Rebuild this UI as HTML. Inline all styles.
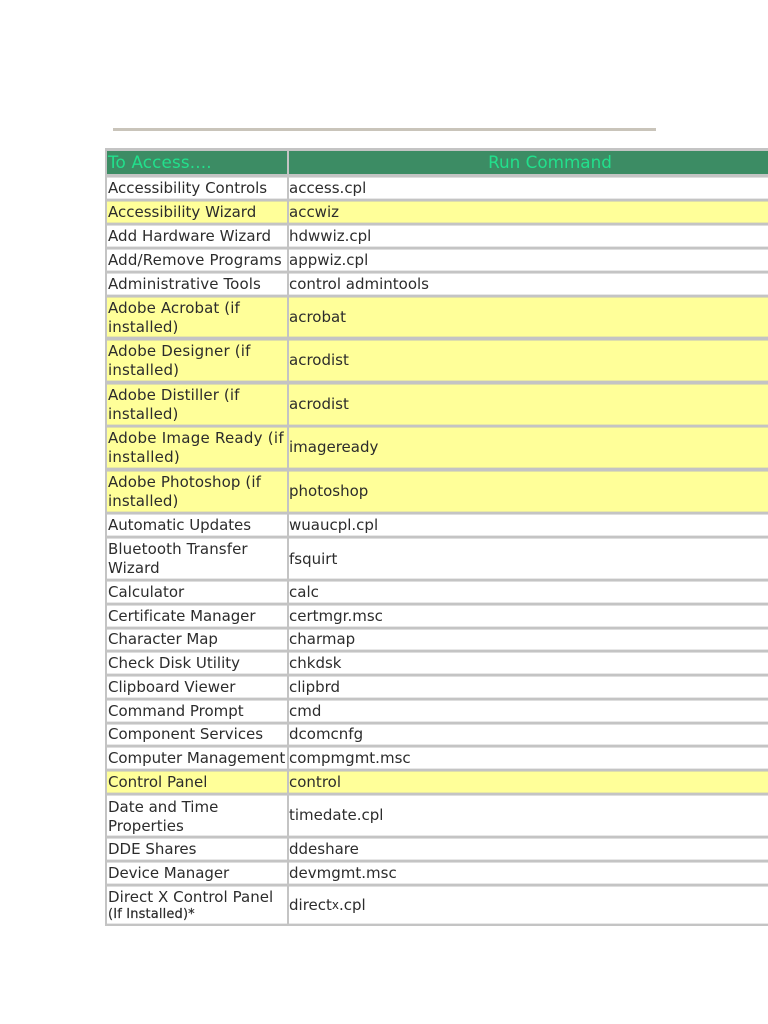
<!DOCTYPE html>
<html><head><meta charset="utf-8">
<style>
html,body{margin:0;padding:0;background:#fff;width:768px;height:1024px;overflow:hidden}
body{position:relative;font-family:"DejaVu Sans",sans-serif;font-size:15px;color:#2c2c2c}
#w{position:absolute;left:0;top:0;width:768px;height:1024px;overflow:hidden;filter:blur(.35px)}
.hr{position:absolute;left:113px;top:128px;width:543px;height:3px;background:#c9c4ba}
.t{position:absolute;left:105px;top:148px;width:663px;height:778px;background:#c4c4c4}
.c{position:absolute;display:flex;align-items:center;line-height:19px;background:#fff;white-space:nowrap;box-sizing:border-box;box-shadow:inset 0 1px rgba(190,190,190,.5),inset 0 -1px rgba(190,190,190,.35)}
.a{left:107px;width:180px;padding-left:1px}
.b{left:289px;width:479px}
.y{background:#ffff99}
.g{background:#3c8c64;color:#22e08c;font-size:16.8px;box-shadow:none}
.d{padding-top:2px}
small{font-size:13px;line-height:15px}
</style></head><body><div id="w">
<div class="hr"></div>
<div class="t"></div>
<div class="c a g" style="top:151px;height:23px;letter-spacing:.15px">To Access....</div>
<div class="c b g" style="top:151px;height:23px;justify-content:center;width:522px">Run Command</div>

<div class="c a" style="top:177px;height:22px">Accessibility Controls</div><div class="c b" style="top:177px;height:22px">access.cpl</div>
<div class="c a y" style="top:201px;height:22px">Accessibility Wizard</div><div class="c b y" style="top:201px;height:22px">accwiz</div>
<div class="c a" style="top:225px;height:22px;letter-spacing:.05px">Add Hardware Wizard</div><div class="c b" style="top:225px;height:22px">hdwwiz.cpl</div>
<div class="c a" style="top:249px;height:22px;letter-spacing:.16px">Add/Remove Programs</div><div class="c b" style="top:249px;height:22px">appwiz.cpl</div>
<div class="c a" style="top:273px;height:22px;letter-spacing:.1px">Administrative Tools</div><div class="c b" style="top:273px;height:22px">control admintools</div>
<div class="c a y d" style="top:297px;height:40px;letter-spacing:.1px">Adobe Acrobat (if<br>installed)</div><div class="c b y" style="top:297px;height:40px">acrobat</div>
<div class="c a y" style="top:340px;height:41px;letter-spacing:.17px">Adobe Designer (if<br>installed)</div><div class="c b y" style="top:340px;height:41px">acrodist</div>
<div class="c a y" style="top:384px;height:41px;letter-spacing:.1px">Adobe Distiller (if<br>installed)</div><div class="c b y" style="top:384px;height:41px">acrodist</div>
<div class="c a y" style="top:427px;height:41px;letter-spacing:.25px">Adobe Image Ready (if<br>installed)</div><div class="c b y" style="top:427px;height:41px">imageready</div>
<div class="c a y" style="top:471px;height:41px;letter-spacing:.1px">Adobe Photoshop (if<br>installed)</div><div class="c b y" style="top:471px;height:41px">photoshop</div>
<div class="c a" style="top:514px;height:22px;letter-spacing:-.05px">Automatic Updates</div><div class="c b" style="top:514px;height:22px">wuaucpl.cpl</div>
<div class="c a" style="top:538px;height:41px;letter-spacing:.1px">Bluetooth Transfer<br>Wizard</div><div class="c b d" style="top:538px;height:41px">fsquirt</div>
<div class="c a" style="top:581px;height:22px">Calculator</div><div class="c b" style="top:581px;height:22px">calc</div>
<div class="c a" style="top:605px;height:22px;letter-spacing:-.05px">Certificate Manager</div><div class="c b" style="top:605px;height:22px">certmgr.msc</div>
<div class="c a" style="top:629px;height:21px;letter-spacing:-.05px">Character Map</div><div class="c b" style="top:629px;height:21px">charmap</div>
<div class="c a" style="top:652px;height:22px">Check Disk Utility</div><div class="c b" style="top:652px;height:22px">chkdsk</div>
<div class="c a" style="top:676px;height:22px">Clipboard Viewer</div><div class="c b" style="top:676px;height:22px">clipbrd</div>
<div class="c a" style="top:700px;height:22px">Command Prompt</div><div class="c b" style="top:700px;height:22px">cmd</div>
<div class="c a" style="top:724px;height:21px">Component Services</div><div class="c b" style="top:724px;height:21px">dcomcnfg</div>
<div class="c a" style="top:747px;height:22px;letter-spacing:-.05px">Computer Management</div><div class="c b" style="top:747px;height:22px">compmgmt.msc</div>
<div class="c a y" style="top:771px;height:22px">Control Panel</div><div class="c b y" style="top:771px;height:22px">control</div>
<div class="c a d" style="top:795px;height:41px">Date and Time<br>Properties</div><div class="c b" style="top:795px;height:41px">timedate.cpl</div>
<div class="c a" style="top:838px;height:22px">DDE Shares</div><div class="c b" style="top:838px;height:22px">ddeshare</div>
<div class="c a" style="top:862px;height:22px;letter-spacing:-.05px">Device Manager</div><div class="c b" style="top:862px;height:22px">devmgmt.msc</div>
<div class="c a" style="top:886px;height:38px"><div style="position:absolute;left:1px;top:2px;line-height:18px;letter-spacing:.05px">Direct X Control Panel<small style="display:block;margin-top:1px;line-height:15px;letter-spacing:.15px;-webkit-text-stroke:.2px #2c2c2c">(If Installed)*</small></div></div><div class="c b" style="top:886px;height:38px">direct<span style="font-size:12px">x</span>.cpl</div>
</div></body></html>
